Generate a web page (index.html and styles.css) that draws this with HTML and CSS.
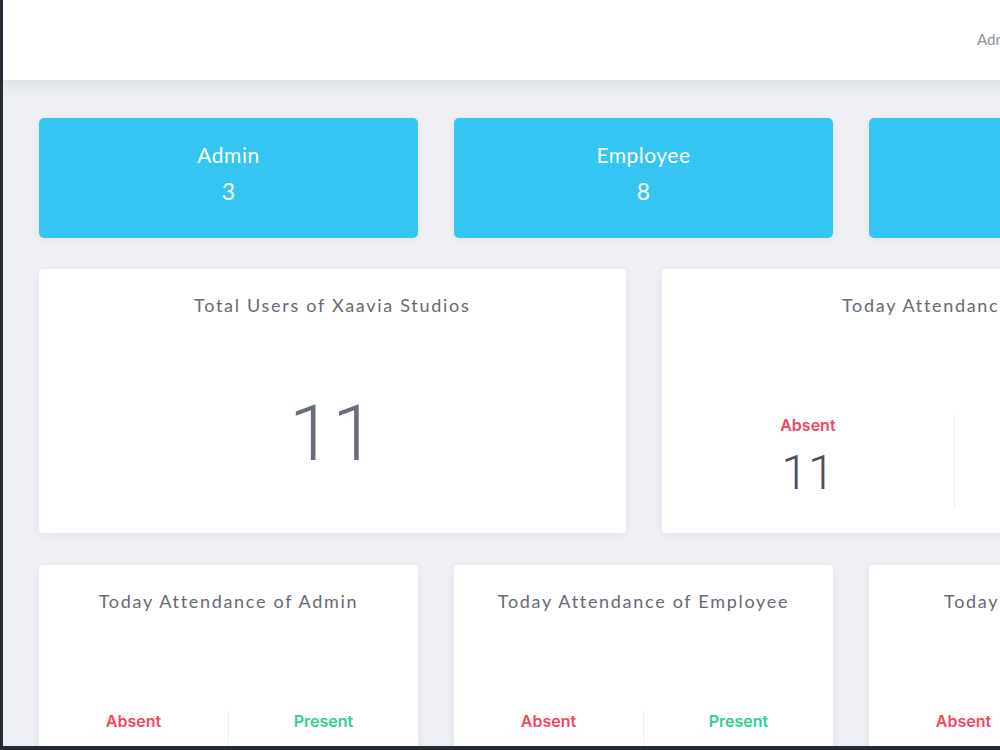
FILE: index.html
```html
<!DOCTYPE html>
<html lang="en">

<head>
    <meta charset="UTF-8">
    <meta name="viewport" content="width=device-width, initial-scale=1.0">
    <title>Dashboard</title>
    <link rel="stylesheet" href="styles.css">
</head>

<body>
    <div class="frame">
        <header class="topbar">
            <span class="user-name">Admin</span>
        </header>

        <main class="content">
            <div class="row row-3">
                <div class="count-card">
                    <div class="count-label">Admin</div>
                    <div class="count-value">3</div>
                </div>
                <div class="count-card">
                    <div class="count-label">Employee</div>
                    <div class="count-value">8</div>
                </div>
                <div class="count-card">
                    <div class="count-label">HR</div>
                    <div class="count-value">0</div>
                </div>
            </div>

            <div class="row row-2">
                <div class="card">
                    <h2 class="card-title">Total Users of Xaavia Studios</h2>
                    <div class="total">11</div>
                </div>
                <div class="card">
                    <h2 class="card-title">Today Attendance of All</h2>
                    <div class="stats">
                        <div class="stat">
                            <div class="stat-label absent">Absent</div>
                            <div class="stat-value">11</div>
                        </div>
                        <div class="stat">
                            <div class="stat-label present">Present</div>
                            <div class="stat-value">0</div>
                        </div>
                    </div>
                </div>
            </div>

            <div class="row row-3">
                <div class="card">
                    <h2 class="card-title">Today Attendance of Admin</h2>
                    <div class="stats">
                        <div class="stat">
                            <div class="stat-label absent">Absent</div>
                            <div class="stat-value">3</div>
                        </div>
                        <div class="stat">
                            <div class="stat-label present">Present</div>
                            <div class="stat-value">0</div>
                        </div>
                    </div>
                </div>
                <div class="card">
                    <h2 class="card-title">Today Attendance of Employee</h2>
                    <div class="stats">
                        <div class="stat">
                            <div class="stat-label absent">Absent</div>
                            <div class="stat-value">8</div>
                        </div>
                        <div class="stat">
                            <div class="stat-label present">Present</div>
                            <div class="stat-value">0</div>
                        </div>
                    </div>
                </div>
                <div class="card">
                    <h2 class="card-title">Today Attendance of HR</h2>
                    <div class="stats">
                        <div class="stat">
                            <div class="stat-label absent">Absent</div>
                            <div class="stat-value">0</div>
                        </div>
                        <div class="stat">
                            <div class="stat-label present">Present</div>
                            <div class="stat-value">0</div>
                        </div>
                    </div>
                </div>
            </div>
        </main>
    </div>
</body>

</html>
```

FILE: styles.css
```css
html,
body {
    margin: 0;
    height: 100%;
    overflow: hidden;
}

body {
    background-color: #262a33;
    font-family: 'Lato', 'Open Sans', sans-serif;
}

.frame {
    margin-left: 3px;
    height: 746px;
    width: 1290px;
    background-color: #eef0f5;
    overflow: hidden;
}

.topbar {
    height: 80px;
    background-color: #fff;
    box-shadow: 0 5px 16px rgba(40, 45, 60, 0.10);
    display: flex;
    align-items: center;
    padding-left: 974px;
    position: relative;
}

.user-name {
    color: #8a8d96;
    font-size: 15px;
    margin-top: -3px;
}

.content {
    padding: 38px 0 0 36px;
    width: 1209px;
}

.row {
    display: grid;
    column-gap: 36px;
    margin-bottom: 31px;
}

.row-2 {
    grid-template-columns: repeat(2, 1fr);
    margin-bottom: 32px;
}

.row-3 {
    grid-template-columns: repeat(3, 1fr);
}

.count-card {
    height: 120px;
    background-color: #35c5f3;
    border-radius: 5px;
    color: #fff;
    display: flex;
    flex-direction: column;
    align-items: center;
    padding-top: 24px;
    box-sizing: border-box;
    box-shadow: 0 2px 8px rgba(40, 45, 60, 0.06);
}

.count-label {
    font-size: 21px;
    line-height: 26px;
    letter-spacing: 0.5px;
}

.count-value {
    font-size: 23px;
    line-height: 26px;
    margin-top: 10px;
}

.card {
    height: 264px;
    background-color: #fff;
    border-radius: 4px;
    box-sizing: border-box;
    padding: 24px 0 25px;
    display: flex;
    flex-direction: column;
    box-shadow: 0 2px 12px rgba(40, 45, 60, 0.06);
}

.card-title {
    margin: 0;
    text-align: center;
    font-weight: 400;
    font-size: 18px;
    line-height: 24px;
    letter-spacing: 1.7px;
    color: #676a74;
}

.total {
    flex: 1;
    display: flex;
    align-items: center;
    justify-content: center;
    font-family: 'Roboto', sans-serif;
    font-weight: 300;
    font-size: 78px;
    color: #686d7d;
    padding-top: 42px;
}

.stats {
    margin-top: auto;
    display: flex;
    height: 93px;
}

.stat {
    flex: 1;
    text-align: center;
    padding-top: 1px;
}

.stat + .stat {
    border-left: 1px solid #eceef2;
}

.stat-label {
    font-family: 'Inter', sans-serif;
    font-weight: 600;
    font-size: 16px;
    line-height: 18px;
}

.absent {
    color: #f3465f;
}

.present {
    color: #2ed18d;
}

.stat-value {
    font-family: 'Roboto', sans-serif;
    font-weight: 300;
    font-size: 48px;
    line-height: 56px;
    margin-top: 11px;
    color: #4b4f5c;
}
```
